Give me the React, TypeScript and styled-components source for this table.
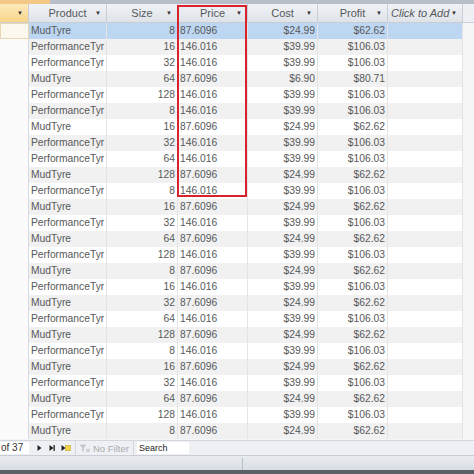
import React from "react";
import styled, { createGlobalStyle, css } from "styled-components";

const Global = createGlobalStyle`
  html, body { margin: 0; padding: 0; background: #f4f5f7; }
  body { font-family: "Liberation Sans", Arial, sans-serif; overflow: hidden; }
`;

const COLS = "29px 78px 71px 70px 70px 70px 75px 1fr";

const Page = styled.div`
  width: 474px;
  height: 474px;
  display: flex;
  flex-direction: column;
  overflow: hidden;
`;

const TabStrip = styled.div`
  height: 4px;
  display: flex;
  background: #b9bfc8;
`;

const ActiveTab = styled.div`
  width: 50px;
  background: #f3c886;
`;

const Sheet = styled.div`
  position: relative;
  background: #ffffff;
`;

const HeaderRow = styled.div`
  display: grid;
  grid-template-columns: ${COLS};
  height: 18px;
  background: linear-gradient(#f0f2f5, #dfe3e8);
  border-bottom: 1px solid #c9ced6;
`;

const HeadCell = styled.div<{ $sel?: boolean; $italic?: boolean; $blank?: boolean }>`
  display: flex;
  align-items: center;
  justify-content: center;
  position: relative;
  font-size: 11px;
  color: #55585c;
  border-right: 1px solid #c9ced6;
  ${(p) => p.$italic && css`font-style: italic; justify-content: flex-start; padding-left: 3px;`}
  ${(p) => p.$sel && css`background: linear-gradient(#fde9b9, #f8d68c);`}
  ${(p) => p.$blank && css`background: #eef0f3; border-right: none;`}
`;

const Arrow = styled.span`
  position: absolute;
  right: 5px;
  top: 6px;
  font-size: 6px;
  color: #333;
  line-height: 1;
`;

const Row = styled.div<{ $alt?: boolean; $sel?: boolean }>`
  display: grid;
  grid-template-columns: ${COLS};
  height: 16px;
  background: ${(p) => (p.$sel ? "#bdd7f2" : p.$alt ? "#f1f1f1" : "#ffffff")};
`;

const Cell = styled.div<{ $right?: boolean }>`
  font-size: 10.3px;
  line-height: 16px;
  color: #57585a;
  white-space: nowrap;
  overflow: hidden;
  padding: 0 2px;
  text-align: ${(p) => (p.$right ? "right" : "left")};
  border-right: 1px solid #e4e4e4;
`;

const Selector = styled.div<{ $sel?: boolean }>`
  background: ${(p) => (p.$sel ? "#fdf8ee" : "#fbfbfb")};
  border-right: 1px solid #d6d9de;
  ${(p) => p.$sel && css`border: 1px solid #e8d7b0;`}
`;

const Filler = styled.div`
  background: #f6f6f6;
`;

const RedBox = styled.div`
  position: absolute;
  left: 177px;
  top: 1px;
  width: 66px;
  height: 188px;
  border: 2px solid #d8232c;
  pointer-events: none;
`;

const NavBar = styled.div`
  height: 14px;
  margin-top: 1px;
  display: flex;
  align-items: center;
  background: #eef0f3;
  border-top: 1px solid #d3d7dd;
  font-size: 10px;
  color: #333;
`;

const RecordBox = styled.div`
  width: 28px;
  height: 12px;
  background: #fff;
  line-height: 12px;
  font-size: 10px;
  padding-left: 1px;
`;

const NavIcons = styled.div`
  display: flex;
  align-items: center;
  gap: 4px;
  padding: 0 4px 0 7px;
  height: 100%;
  border-right: 1px solid #d3d7dd;
`;

const FilterBtn = styled.div`
  display: flex;
  align-items: center;
  gap: 2px;
  padding: 0 4px 0 3px;
  color: #a8abb0;
  font-size: 9.5px;
  height: 100%;
  border-right: 1px solid #d3d7dd;
`;

const SearchBox = styled.div`
  width: 50px;
  height: 12px;
  margin-left: 3px;
  background: #fff;
  font-size: 9px;
  line-height: 12px;
  padding-left: 2px;
  color: #222;
`;

const Status = styled.div`
  flex: 1;
  display: flex;
  background: linear-gradient(#e9ecef, #d9dde3);
  border-top: 1px solid #c9ced6;
`;

const StatusLeft = styled.div`
  width: 242px;
  border-right: 1px solid #b7bcc4;
  margin: 2px 0 0;
`;

const DarkBand = styled.div`
  height: 4px;
  background: #5a5f68;
`;

type R = [string, number, string, string, string];
const rows: R[] = [
  ["MudTyre", 8, "87.6096", "$24.99", "$62.62"],
  ["PerformanceTyr", 16, "146.016", "$39.99", "$106.03"],
  ["PerformanceTyr", 32, "146.016", "$39.99", "$106.03"],
  ["MudTyre", 64, "87.6096", "$6.90", "$80.71"],
  ["PerformanceTyr", 128, "146.016", "$39.99", "$106.03"],
  ["PerformanceTyr", 8, "146.016", "$39.99", "$106.03"],
  ["MudTyre", 16, "87.6096", "$24.99", "$62.62"],
  ["PerformanceTyr", 32, "146.016", "$39.99", "$106.03"],
  ["PerformanceTyr", 64, "146.016", "$39.99", "$106.03"],
  ["MudTyre", 128, "87.6096", "$24.99", "$62.62"],
  ["PerformanceTyr", 8, "146.016", "$39.99", "$106.03"],
  ["MudTyre", 16, "87.6096", "$24.99", "$62.62"],
  ["PerformanceTyr", 32, "146.016", "$39.99", "$106.03"],
  ["MudTyre", 64, "87.6096", "$24.99", "$62.62"],
  ["PerformanceTyr", 128, "146.016", "$39.99", "$106.03"],
  ["MudTyre", 8, "87.6096", "$24.99", "$62.62"],
  ["PerformanceTyr", 16, "146.016", "$39.99", "$106.03"],
  ["MudTyre", 32, "87.6096", "$24.99", "$62.62"],
  ["PerformanceTyr", 64, "146.016", "$39.99", "$106.03"],
  ["MudTyre", 128, "87.6096", "$24.99", "$62.62"],
  ["PerformanceTyr", 8, "146.016", "$39.99", "$106.03"],
  ["MudTyre", 16, "87.6096", "$24.99", "$62.62"],
  ["PerformanceTyr", 32, "146.016", "$39.99", "$106.03"],
  ["MudTyre", 64, "87.6096", "$24.99", "$62.62"],
  ["PerformanceTyr", 128, "146.016", "$39.99", "$106.03"],
  ["MudTyre", 8, "87.6096", "$24.99", "$62.62"],
];

const Tri = ({ bar, star }: { bar?: boolean; star?: boolean }) => (
  <svg width={star ? 11 : 8} height="8" viewBox={star ? "0 0 11 8" : "0 0 8 8"}>
    <path d="M1.5 1 L5.5 4 L1.5 7 Z" fill="#222" />
    {bar && <rect x="5.5" y="1" width="1.3" height="6" fill="#222" />}
    {star && <rect x="5.5" y="1.5" width="5" height="5" fill="#f2d34c" stroke="#c9a420" strokeWidth="0.6" />}
  </svg>
);

const Funnel = () => (
  <svg width="12" height="9" viewBox="0 0 12 9">
    <path d="M0.5 0.5 H7.5 L4.8 4 V8 L3.2 7 V4 Z" fill="#c2c5ca" />
    <path d="M7.5 5 L10.5 8 M10.5 5 L7.5 8" stroke="#c2c5ca" strokeWidth="1.2" />
  </svg>
);

export default function App() {
  return (
    <Page>
      <Global />
      <TabStrip>
        <ActiveTab />
      </TabStrip>
      <Sheet>
        <HeaderRow>
          <HeadCell $sel>
            <Arrow>▼</Arrow>
          </HeadCell>
          <HeadCell>
            Product<Arrow>▼</Arrow>
          </HeadCell>
          <HeadCell>
            Size<Arrow>▼</Arrow>
          </HeadCell>
          <HeadCell>
            Price<Arrow>▼</Arrow>
          </HeadCell>
          <HeadCell>
            Cost<Arrow>▼</Arrow>
          </HeadCell>
          <HeadCell>
            Profit<Arrow>▼</Arrow>
          </HeadCell>
          <HeadCell $italic>
            Click to Add<Arrow>▼</Arrow>
          </HeadCell>
          <HeadCell $blank />
        </HeaderRow>
        {rows.map((r, i) => (
          <Row key={i} $alt={i % 2 === 1} $sel={i === 0}>
            <Selector $sel={i === 0} />
            <Cell>{r[0]}</Cell>
            <Cell $right>{r[1]}</Cell>
            <Cell>{r[2]}</Cell>
            <Cell $right>{r[3]}</Cell>
            <Cell $right>{r[4]}</Cell>
            <Cell />
            <Filler />
          </Row>
        ))}
        <RedBox />
      </Sheet>
      <NavBar>
        <RecordBox>of 37</RecordBox>
        <NavIcons>
          <Tri />
          <Tri bar />
          <Tri star />
        </NavIcons>
        <FilterBtn>
          <Funnel />
          No Filter
        </FilterBtn>
        <SearchBox>Search</SearchBox>
      </NavBar>
      <Status>
        <StatusLeft />
      </Status>
      <DarkBand />
    </Page>
  );
}
